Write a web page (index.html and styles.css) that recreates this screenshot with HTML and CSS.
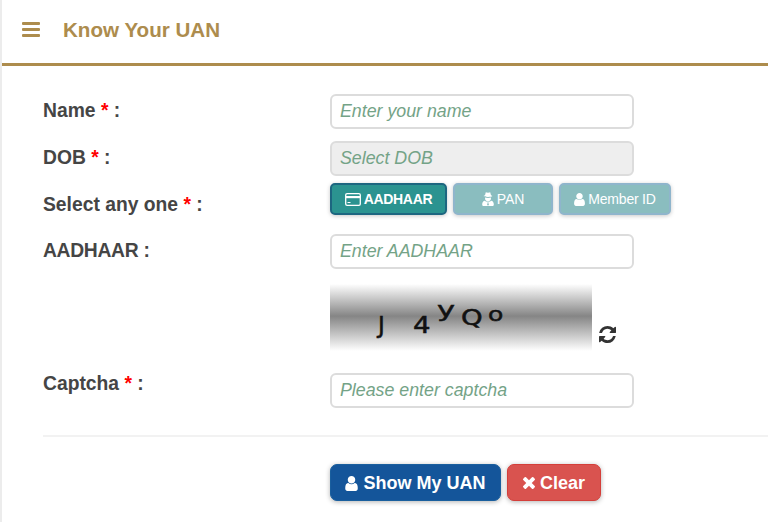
FILE: index.html
```html
<!DOCTYPE html>
<html lang="en">
<head>
<meta charset="utf-8">
<title>Know Your UAN</title>
<link rel="stylesheet" href="styles.css">
</head>
<body>
<div class="page">
  <header class="header">
    <span class="burger"><i></i><i></i><i></i></span>
    <h1 class="title">Know Your UAN</h1>
  </header>
  <form class="form">
    <div class="row row-name">
      <label class="label">Name <b>*</b> :</label>
      <div class="input"><span>Enter your name</span></div>
    </div>
    <div class="row row-dob">
      <label class="label">DOB <b>*</b> :</label>
      <div class="input disabled"><span>Select DOB</span></div>
    </div>
    <div class="row row-select">
      <label class="label">Select any one <b>*</b> :</label>
      <div class="choices">
        <button type="button" class="choice active aadhaar">
          <svg class="ic-card" viewBox="0 0 16 13"><rect x="0.7" y="0.7" width="14.6" height="11.6" rx="1.4" fill="none" stroke="#fff" stroke-width="1.3"/><rect x="1" y="3" width="14" height="2.2" fill="#fff"/><rect x="2.5" y="9" width="3" height="1" fill="#fff"/></svg>
          AADHAAR
        </button>
        <button type="button" class="choice pan">
          <svg class="ic-spy" viewBox="0 0 12 14"><path d="M3.8 0.3 C4.6 0.9 7.4 0.9 8.2 0.3 L9 3.2 C10 3.5 10.4 3.8 10.4 4.1 C10.4 4.6 8.4 5 6 5 C3.6 5 1.6 4.6 1.6 4.1 C1.6 3.8 2 3.5 3 3.2 Z" fill="#fff"/><path d="M3 5.6 C4.8 6 7.2 6 9 5.6 L8.8 7.6 C8.4 8.8 7.2 9.4 6 9.4 C4.8 9.4 3.6 8.8 3.2 7.6 Z" fill="#fff"/><path d="M2.8 8.8 C4 10.2 8 10.2 9.2 8.8 C10.8 9 11.8 10.4 11.8 12.4 C11.8 13.4 11.2 14 10.2 14 H1.8 C0.800 14 0.200 13.400 0.200 12.400 C0.200 10.400 1.200 9 2.800 8.800 Z" fill="#fff"/><path d="M5.200 10.400 H6.800 L6.400 11.200 L7 13 L6 13.600 L5 13 L5.600 11.200 Z" fill="#8abdbf"/></svg>
          PAN
        </button>
        <button type="button" class="choice member">
          <svg class="ic-user" viewBox="256 128 1280 1536"><path fill="#fff" d="M1536 1399q0 109-62.500 187t-150.500 78h-854q-88 0-150.500-78t-62.500-187q0-85 8.500-160.500t31.500-151.500 58.500-130 94-88.500 134.500-34.500q131 128 313 128t313-128q76 0 134.500 34.500t94 88.500 58.500 130 31.500 151.500 8.500 160.500zm-256-887q0 159-112.500 271.500t-271.500 112.500-271.500-112.500-112.500-271.500 112.500-271.500 271.500-112.500 271.500 112.500 112.500 271.500z"/></svg>
          Member ID
        </button>
      </div>
    </div>
    <div class="row row-aadhaar">
      <label class="label label-tight">AADHAAR :</label>
      <div class="input"><span>Enter AADHAAR</span></div>
    </div>
    <div class="row row-captcha-img">
      <div class="spacer"></div>
      <div class="captcha"><span class="c1">J</span><span class="c2">4</span><span class="c3">y</span><span class="c4">Q</span><span class="c5">o</span></div>
      <svg class="refresh" viewBox="0 128 1536 1536"><path fill="#333" d="M1511 1056q0 5-1 7-64 268-268 434.500t-478 166.500q-146 0-282.500-55t-243.500-157l-129 129q-19 19-45 19t-45-19-19-45v-448q0-26 19-45t45-19h448q26 0 45 19t19 45-19 45l-137 137q71 66 161 102t187 36q134 0 250-65t186-179q11-17 53-117 8-23 30-23h192q13 0 22.500 9.500t9.500 22.500zm25-800v448q0 26-19 45t-45 19h-448q-26 0-45-19t-19-45 19-45l138-138q-148-137-349-137-134 0-250 65t-186 179q-11 17-53 117-8 23-30 23h-199q-13 0-22.500-9.500t-9.500-22.500v-7q65-268 270-434.500t480-166.500q146 0 284 55.500t245 156.500l130-129q19-19 45-19t45 19 19 45z"/></svg>
    </div>
    <div class="row row-captcha">
      <label class="label">Captcha <b>*</b> :</label>
      <div class="input"><span>Please enter captcha</span></div>
    </div>
    <hr class="divider">
    <div class="actions">
      <button type="button" class="btn primary">
        <svg class="ic-btn" viewBox="256 128 1280 1536"><path fill="#fff" d="M1536 1399q0 109-62.500 187t-150.500 78h-854q-88 0-150.500-78t-62.500-187q0-85 8.500-160.500t31.500-151.500 58.500-130 94-88.500 134.500-34.500q131 128 313 128t313-128q76 0 134.500 34.500t94 88.500 58.500 130 31.500 151.500 8.500 160.500zm-256-887q0 159-112.500 271.500t-271.500 112.500-271.500-112.500-112.500-271.500 112.500-271.500 271.500-112.500 271.500 112.500 112.500 271.500z"/></svg>
        Show My UAN
      </button>
      <button type="button" class="btn danger">
        <svg class="ic-x" viewBox="110 366 1188 1188"><path fill="#fff" d="M1298 1322q0 40-28 68l-136 136q-28 28-68 28t-68-28l-294-294-294 294q-28 28-68 28t-68-28l-136-136q-28-28-28-68t28-68l294-294-294-294q-28-28-28-68t28-68l136-136q28-28 68-28t68 28l294 294 294-294q28-28 68-28t68 28l136 136q28 28 28 68t-28 68l-294 294 294 294q28 28 28 68z"/></svg>
        Clear
      </button>
    </div>
  </form>
</div>
</body>
</html>
```
FILE: styles.css
```css
* { box-sizing: border-box; }
html, body { margin: 0; padding: 0; height: 100%; background: #fff; overflow: hidden; }
body { font-family: "Liberation Sans", Arial, sans-serif; }
.page { width: 768px; height: 522px; border-left: 2px solid #ececec; }

.header { height: 66px; border-bottom: 3px solid #ad8c4d; display: flex; align-items: center; padding-left: 20px; padding-bottom: 4px; }
.burger { width: 18px; display: flex; flex-direction: column; gap: 3px; margin-right: 23px; }
.burger i { display: block; height: 3px; background: #ad8c4d; border-radius: 1px; }
.title { margin: 0; font-size: 20.6px; font-weight: 700; color: #ad8c4d; }

.form { padding-left: 41px; }
.row { display: flex; align-items: flex-start; }
.label { width: 287px; font-size: 19.3px; font-weight: 700; color: #454545; flex: none; }
.label-tight { letter-spacing: -0.3px; }
.label b { color: #f00; }
.spacer { width: 287px; flex: none; }

.input { width: 304px; height: 35px; border: 2px solid #dcdcdc; border-radius: 6px; background: #fff; display: flex; align-items: center; padding-left: 8px; font-size: 17.8px; font-style: italic; color: #74a387; }
.input span { margin-top: -1px; }
.input.disabled { background: #eeeeee; }

.row-name { margin-top: 28px; }
.row-name .label { padding-top: 6px; }
.row-dob { margin-top: 12px; }
.row-dob .label { padding-top: 6px; }
.row-select { margin-top: 7px; }
.row-select .label { padding-top: 11px; }
.row-aadhaar { margin-top: 18px; }
.row-aadhaar .label { padding-top: 6px; }
.row-captcha-img { margin-top: 15px; height: 67px; }
.row-captcha { margin-top: 22px; }
.row-captcha .label { margin-top: 0; }

.choices { display: flex; gap: 6px; }
.choice { height: 32px; border-radius: 5px; font-family: inherit; font-size: 14px; color: #fff; display: flex; align-items: center; justify-content: center; padding: 0; gap: 3px; box-shadow: 0 1px 4px rgba(0,0,0,.22); cursor: pointer; }
.choice.aadhaar { width: 117px; background: #2b9390; border: 2px solid #1d6680; font-weight: 700; letter-spacing: -0.35px; }
.choice.pan { width: 100px; background: #8abdbf; border: 2px solid #8fb5cc; }
.choice.member { width: 112px; background: #8abdbf; border: 2px solid #8fb5cc; letter-spacing: -0.2px; }
.ic-card { width: 16px; height: 13px; }
.ic-spy { width: 12px; height: 14px; }
.ic-user { width: 11px; height: 13px; }

.captcha { width: 262px; height: 67px; flex: none; background: linear-gradient(to bottom, #fff 0%, #858585 48%, #fff 100%); display: flex; align-items: flex-start; font-family: "DejaVu Sans", sans-serif; color: #111; -webkit-text-stroke: 0.5px #111; }
.captcha span { display: block; line-height: 1; transform-origin: left top; }
.c1 { width: 8px; font-size: 23px; margin: 30px 0 0 48px; }
.c2 { width: 17px; font-size: 23px; margin: 30px 0 0 27px; transform: scaleX(1.2); }
.c3 { width: 18px; font-size: 21px; margin: 16px 0 0 7px; transform: scaleX(1.45); }
.c4 { width: 21px; font-size: 22px; margin: 23px 0 0 6px; transform: scaleX(1.25); }
.c5 { width: 15px; font-size: 20px; margin: 20px 0 0 6px; transform: scaleX(1.25); }
.refresh { width: 17px; height: 17px; margin: 42px 0 0 7px; flex: none; }

.divider { margin: 27px 0 0; border: 0; border-top: 2px solid #f2f2f2; height: 0; }

.actions { display: flex; gap: 6px; margin: 27px 0 0 287px; }
.btn { height: 37px; border-radius: 7px; font-family: inherit; font-size: 18px; font-weight: 700; color: #fff; display: flex; align-items: center; justify-content: center; padding: 1px 0 0; gap: 5px; box-shadow: 0 1px 5px rgba(0,0,0,.3); cursor: pointer; }
.btn.primary { width: 171px; background: #14559a; border: 1px solid #1a5f9e; }
.btn.danger { width: 94px; background: #d9534f; border: 1px solid #d43f3a; }
.ic-btn { width: 13px; height: 15px; }
.ic-x { width: 12px; height: 12px; }
```
